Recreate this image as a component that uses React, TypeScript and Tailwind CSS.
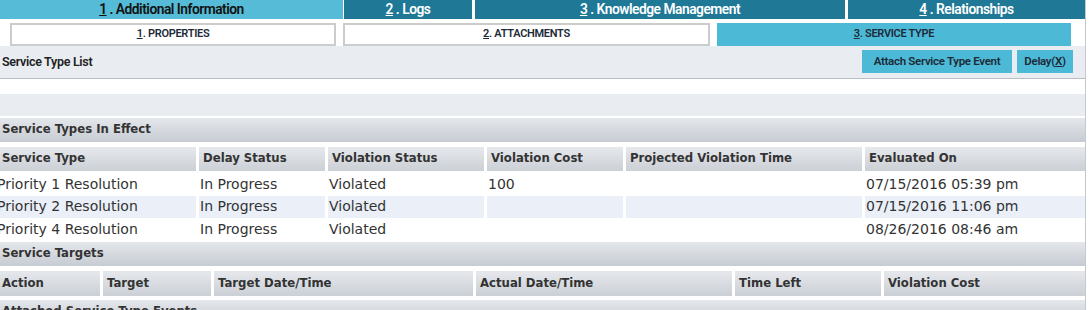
import React from 'react';

const tabFont = { fontFamily: 'Roboto, "Open Sans", sans-serif' };

const effectCols = ['Service Type', 'Delay Status', 'Violation Status', 'Violation Cost', 'Projected Violation Time', 'Evaluated On'];
const effectRows = [
  ['Priority 1 Resolution', 'In Progress', 'Violated', '100', '', '07/15/2016 05:39 pm'],
  ['Priority 2 Resolution', 'In Progress', 'Violated', '', '', '07/15/2016 11:06 pm'],
  ['Priority 4 Resolution', 'In Progress', 'Violated', '', '', '08/26/2016 08:46 am'],
];
const targetCols = ['Action', 'Target', 'Target Date/Time', 'Actual Date/Time', 'Time Left', 'Violation Cost'];

const SectionBar: React.FC<{ title: string }> = ({ title }) => (
  <div className="h-[24px] flex items-center pl-[2px] bg-linear-to-b from-[#e4e7eb] to-[#c7ccd3] font-['DejaVu_Sans',Verdana,sans-serif] text-[11.7px] font-bold text-[#333]">
    {title}
  </div>
);

const App: React.FC = () => {
  return (
    <div className="h-[310px] w-[1089px] overflow-hidden bg-white">
      <div className="w-[1086px] min-h-[310px] border-r border-[#c5c9cf]">
        {/* main tabs */}
        <div className="flex h-[19px] text-[13.8px] font-semibold tracking-[-0.5px]" style={tabFont}>
          <div className="w-[343px] bg-[#55bbd6] text-[#111] flex items-center justify-center">
            <span><u>1</u> . Additional Information</span>
          </div>
          <div className="w-[128px] ml-px bg-[#1e7896] text-white flex items-center justify-center">
            <span><u>2</u> . Logs</span>
          </div>
          <div className="w-[370px] ml-[3px] bg-[#1e7896] text-white flex items-center justify-center">
            <span><u>3</u> . Knowledge Management</span>
          </div>
          <div className="w-[237px] ml-[3px] bg-[#1e7896] text-white flex items-center justify-center">
            <span><u>4</u> . Relationships</span>
          </div>
        </div>

        {/* sub tabs */}
        <div className="flex h-[27px] pt-[4px] text-[11px] font-semibold text-[#1d2a38] tracking-[-0.3px]" style={tabFont}>
          <div className="ml-[10px] w-[326px] h-[23px] border-2 border-[#cccccc] flex items-center justify-center">
            <span><u>1</u>. PROPERTIES</span>
          </div>
          <div className="ml-[7px] w-[367px] h-[23px] border-2 border-[#cccccc] flex items-center justify-center">
            <span><u>2</u>. ATTACHMENTS</span>
          </div>
          <div className="ml-[7px] w-[354px] h-[23px] bg-[#4cb9d6] flex items-center justify-center">
            <span><u>3</u>. SERVICE TYPE</span>
          </div>
        </div>

        {/* toolbar */}
        <div className="h-[33px] bg-[#e9ecf1] border-b border-[#b9bec5] flex items-center pl-[2px] pr-[12px] text-[12.5px] font-semibold text-[#222] tracking-[-0.3px]" style={tabFont}>
          <span className="flex-1">Service Type List</span>
          <div className="flex gap-[5px] pb-px text-[11.5px] text-[#1d2a38]">
            <button className="w-[150px] h-[23px] bg-[#4cb9d6] font-semibold">Attach Service Type Event</button>
            <button className="w-[56px] h-[23px] bg-[#4cb9d6] font-semibold">Delay(<u>X</u>)</button>
          </div>
        </div>

        <div className="h-[15px]" />
        <div className="h-[22px] bg-[#e9ecf1]" />
        <div className="h-[2px]" />

        <SectionBar title="Service Types In Effect" />
        <div className="h-[5px]" />

        <div className="font-['DejaVu_Sans',Verdana,sans-serif] text-[#333] -ml-[2px]">
          <div className="grid grid-cols-[198px_126px_156px_136px_236px_1fr] gap-x-[3px] h-[24px] text-[11.7px] font-bold">
            {effectCols.map((c) => (
              <div key={c} className="flex items-center pl-[4px] bg-linear-to-b from-[#e6e8ec] to-[#cbd0d6]">{c}</div>
            ))}
          </div>
          <div className="h-[2px]" />
          {effectRows.map((r, i) => (
            <div key={i} className="grid grid-cols-[198px_126px_156px_136px_236px_1fr] gap-x-[3px] h-[22.67px] text-[14px]">
              {r.map((v, j) => (
                <div key={j} className={`flex items-center ${j === 0 ? '-ml-px' : 'pl-px'} ${i === 1 ? 'bg-[#eaeff8]' : ''}`}>{v}</div>
              ))}
            </div>
          ))}
        </div>

        <div className="h-px" />
        <SectionBar title="Service Targets" />
        <div className="h-[5px]" />
        <div className="font-['DejaVu_Sans',Verdana,sans-serif] text-[#333] -ml-[2px]">
          <div className="grid grid-cols-[102px_108px_259px_256px_146px_1fr] gap-x-[3px] h-[25px] text-[11.7px] font-bold">
            {targetCols.map((c) => (
              <div key={c} className="flex items-center pl-[4px] bg-linear-to-b from-[#e6e8ec] to-[#cbd0d6]">{c}</div>
            ))}
          </div>
        </div>
        <div className="h-[4px]" />
        <SectionBar title="Attached Service Type Events" />
      </div>
    </div>
  );
};

export default App;
